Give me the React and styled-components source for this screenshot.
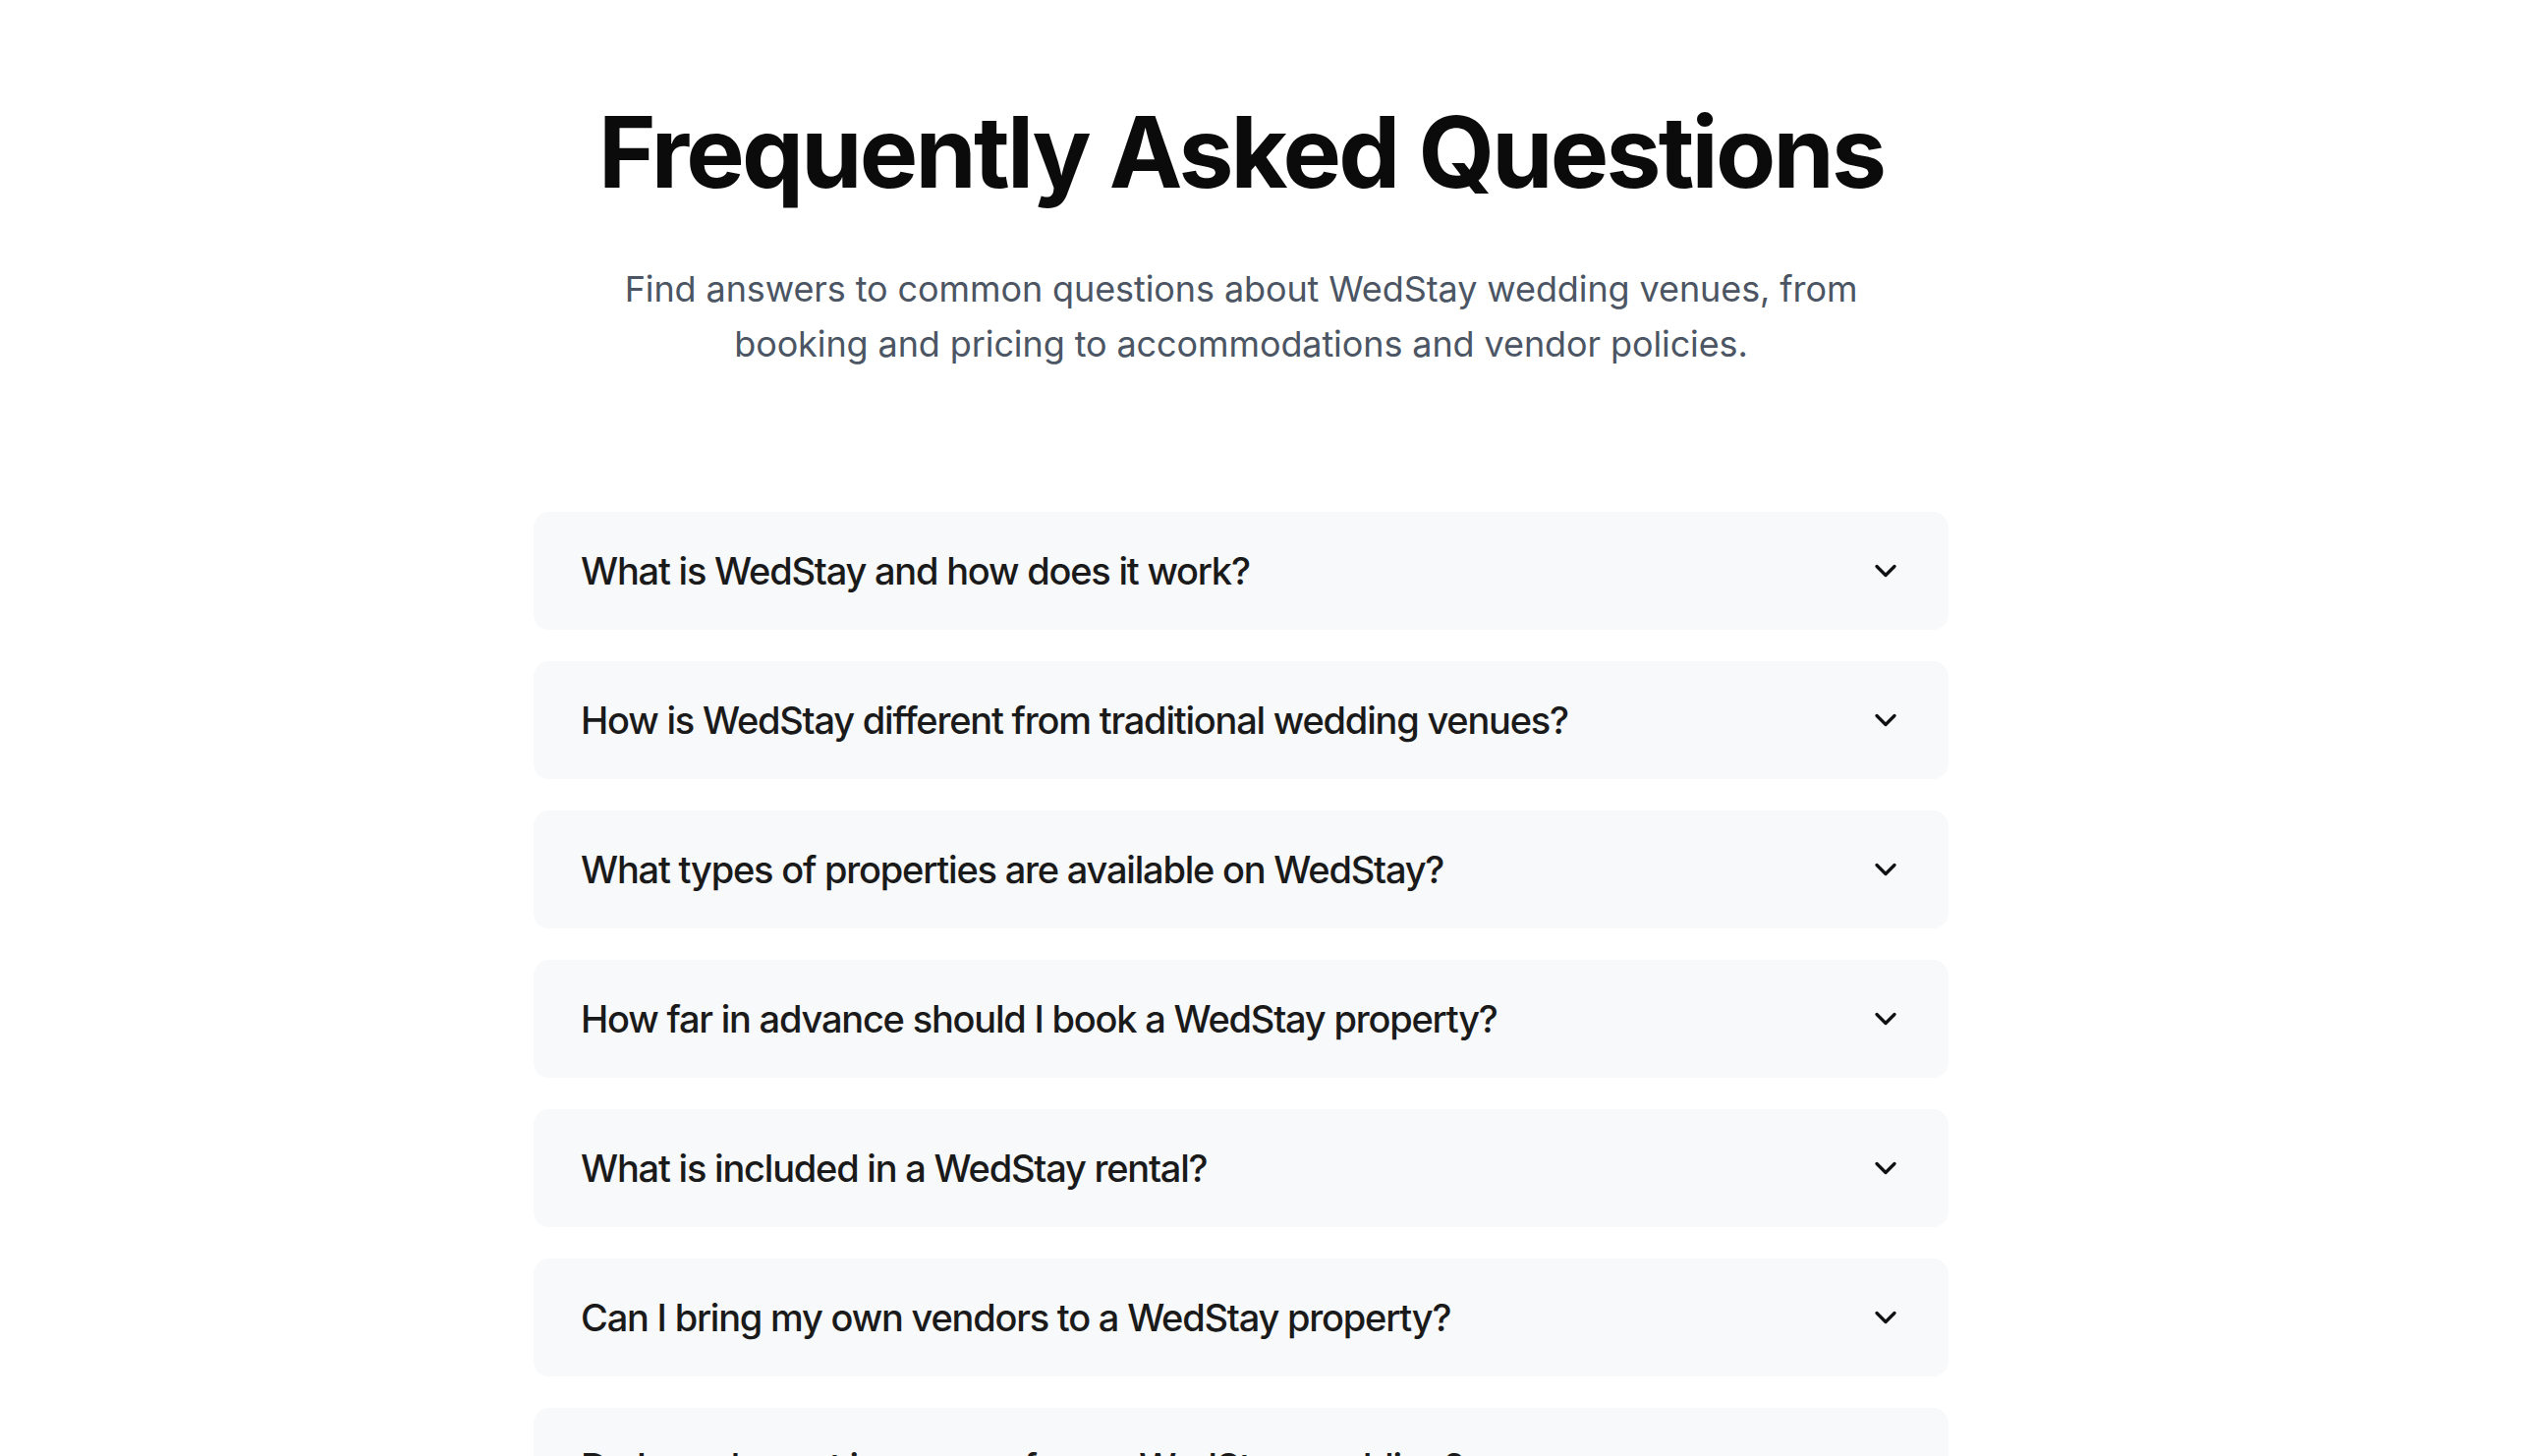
import React from 'react'
import styled, { createGlobalStyle } from 'styled-components'
import { ChevronDown } from 'lucide-react'

const GlobalStyle = createGlobalStyle`
  * {
    box-sizing: border-box;
  }
  body {
    margin: 0;
    background: #ffffff;
    font-family: Inter, 'Noto Sans', sans-serif;
    -webkit-font-smoothing: antialiased;
  }
`

const Page = styled.main`
  display: flex;
  flex-direction: column;
  align-items: center;
  padding: 100px 62px 0 0;
`

const Header = styled.header`
  display: flex;
  flex-direction: column;
  align-items: center;
  text-align: center;
`

const Title = styled.h1`
  margin: 0;
  font-size: 100px;
  line-height: 1.1;
  font-weight: 700;
  letter-spacing: -0.028em;
  color: #0b0b0b;
`

const Subtitle = styled.p`
  margin: 56px 0 0;
  max-width: 1300px;
  font-size: 36px;
  line-height: 56px;
  font-weight: 400;
  letter-spacing: -0.1px;
  color: #4b5563;
`

const List = styled.ul`
  list-style: none;
  margin: 143px 0 0;
  padding: 0;
  width: 100%;
  max-width: 1440px;
  display: flex;
  flex-direction: column;
  gap: 32px;
`

const Item = styled.li`
  background: #f8f9fb;
  border-radius: 16px;
`

const Question = styled.button`
  all: unset;
  box-sizing: border-box;
  width: 100%;
  height: 120px;
  padding: 0 46px 0 48px;
  display: flex;
  align-items: center;
  justify-content: space-between;
  cursor: pointer;
  font-family: Inter, 'Noto Sans', sans-serif;
  font-size: 38px;
  font-weight: 500;
  letter-spacing: -0.032em;
  color: #1a1a1a;
`

const Chevron = styled(ChevronDown)`
  flex-shrink: 0;
  color: #111111;
`

const questions = [
  'What is WedStay and how does it work?',
  'How is WedStay different from traditional wedding venues?',
  'What types of properties are available on WedStay?',
  'How far in advance should I book a WedStay property?',
  'What is included in a WedStay rental?',
  'Can I bring my own vendors to a WedStay property?',
  'Do I need event insurance for my WedStay wedding?',
]

export default function App() {
  return (
    <>
      <GlobalStyle />
      <Page>
        <Header>
          <Title>Frequently Asked Questions</Title>
          <Subtitle>
            Find answers to common questions about WedStay wedding venues, from
            booking and pricing to accommodations and vendor policies.
          </Subtitle>
        </Header>
        <List>
          {questions.map(q => (
            <Item key={q}>
              <Question type='button'>
                <span>{q}</span>
                <Chevron size={36} strokeWidth={2.2} />
              </Question>
            </Item>
          ))}
        </List>
      </Page>
    </>
  )
}
